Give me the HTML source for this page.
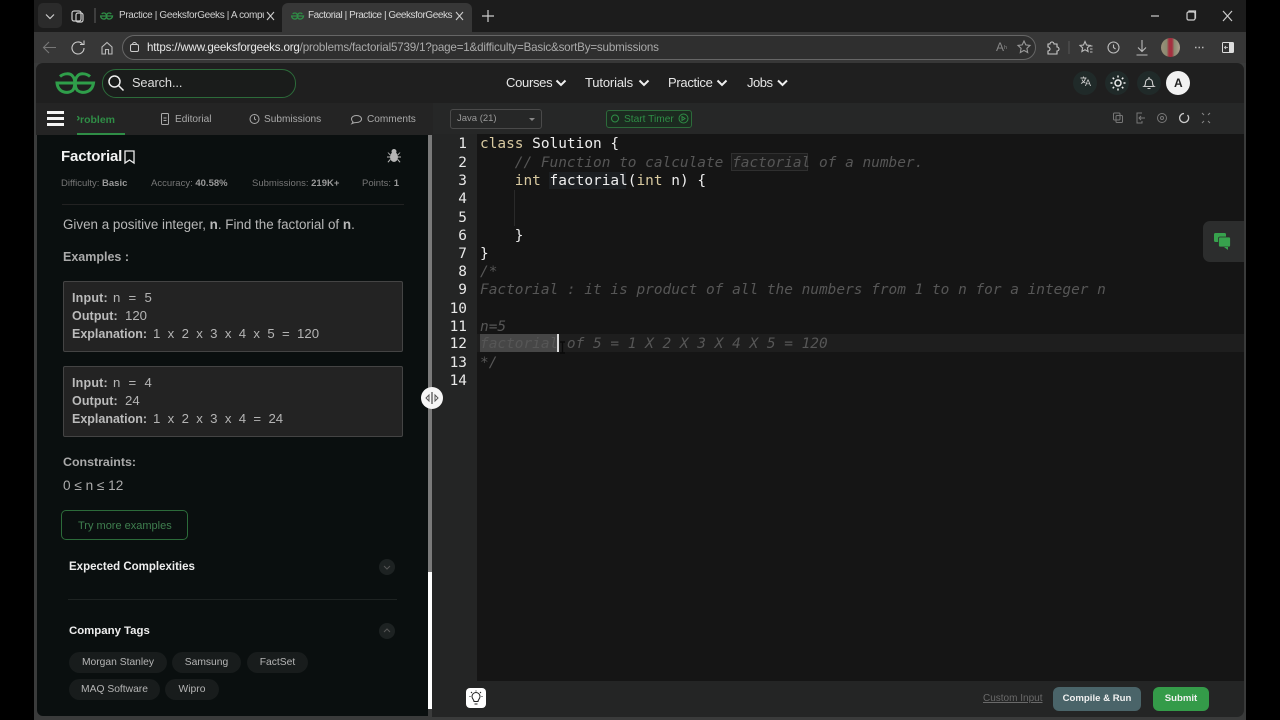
<!DOCTYPE html>
<html><head><meta charset="utf-8"><style>
html,body{margin:0;padding:0;background:#000;width:1280px;height:720px;overflow:hidden}
body{position:relative;font-family:"Liberation Sans",sans-serif;color:#ddd}
.a{position:absolute}
.t{position:absolute;white-space:nowrap;line-height:1}
svg{position:absolute;overflow:visible}
.m{font-family:"DejaVu Sans Mono","Liberation Mono",monospace;font-size:14.45px;white-space:pre;position:absolute;line-height:18px}
.c{color:#565656;font-style:italic}
.n{position:absolute;width:33px;text-align:right;left:434px;font-family:"DejaVu Sans Mono",monospace;font-size:14.45px;color:#e8e8e8;line-height:18px}
.b{font-weight:bold}
.nav{font-size:13px;color:#e6e6e6;letter-spacing:-.3px}
.ltab{font-size:10.1px;color:#aaa}
.stat{font-size:9.5px;color:#777}
.stat b{color:#999}
.lab{font-size:12.5px;color:#bbb;font-weight:bold}
.val{font-size:13.2px;color:#b4b4b4}
.tag{position:absolute;height:21px;border-radius:11px;background:#181c1c;color:#b5b5b5;font-size:10.3px;line-height:22px;text-align:center}
.box{position:absolute;left:63px;width:338px;height:69px;background:#232323;border:1px solid #444;border-radius:2px}
</style></head><body>
<div class="a" style="left:34px;top:0;width:1212px;height:720px;background:#3a3b3b"></div>
<div class="a" style="left:34px;top:0;width:1212px;height:32px;background:#1c1c1c"></div>
<div class="a" style="left:34px;top:32px;width:1212px;height:31px;background:#373737"></div>
<!-- tabs -->
<div class="a" style="left:38px;top:3px;width:24px;height:25px;background:#2b2b2b;border-radius:5px"></div>
<div class="a" style="left:282px;top:3px;width:190px;height:29px;background:#373737;border-radius:6px 6px 0 0"></div>
<svg style="left:0;top:0" width="1280" height="32" fill="none" stroke="#ccc" stroke-width="1.2">
<path d="M46 14.500l4 4 4-4"/>
<rect x="72" y="11" width="9" height="10" rx="2"/><rect x="76" y="13" width="7" height="9" rx="2"/>
<path d="M95 8v15" stroke="#555"/>
<path d="M267 12l7 8M274 12l-7 8M456 12l7 8M463 12l-7 8" stroke-width="1.1"/>
<path d="M488 10v12M482 16h12"/>
<path d="M1151 16h8"/>
<rect x="1187" y="12" width="8" height="8" rx="1.500"/><path d="M1189 12v-1h6.500v7h-.5"/>
<path d="M1223 11l9 10M1232 11l-9 10"/>
</svg>
<svg style="left:100px;top:12px" width="13" height="8" viewBox="0 0 40 22" fill="none" stroke="#2f8d46" stroke-width="4"><path d="M35 4.500C31 1 25 1 22.500 4C19.500 7 19.500 15 22.500 18.500C27 22 37 21 38.500 11H2C3 21 13 22 17.500 18.500C20.500 15 20.500 7 17.500 4C15 1 9 1 5 4.500"/></svg>
<svg style="left:291px;top:12px" width="13" height="8" viewBox="0 0 40 22" fill="none" stroke="#2f8d46" stroke-width="4"><path d="M35 4.500C31 1 25 1 22.500 4C19.500 7 19.500 15 22.500 18.500C27 22 37 21 38.500 11H2C3 21 13 22 17.500 18.500C20.500 15 20.500 7 17.500 4C15 1 9 1 5 4.500"/></svg>
<div class="t" style="left:119px;top:11px;font-size:10px;letter-spacing:-.35px;color:#d0d0d0;width:145px;overflow:hidden;height:13px">Practice | GeeksforGeeks | A compu</div>
<div class="t" style="left:308px;top:11px;font-size:10px;letter-spacing:-.45px;color:#d8d8d8;width:146px;overflow:hidden;height:13px">Factorial | Practice | GeeksforGeeks</div>
<!-- toolbar -->
<div class="a" style="left:122px;top:35px;width:914px;height:25px;box-sizing:border-box;border:1px solid #666;border-radius:13px;background:#2f2f2f"></div>
<svg style="left:129px;top:41px" width="12" height="12" fill="none" stroke="#ccc"><rect x="1.500" y="3.500" width="8" height="7" rx="1.500"/><path d="M3.500 3.500a2 2 0 0 1 4 0"/></svg>
<div class="t" style="left:147px;top:42px;font-size:11.600px;letter-spacing:-.18px;color:#aaa"><span style="color:#e8e8e8">https://www.geeksforgeeks.org</span>/problems/factorial5739/1?page=1&amp;difficulty=Basic&amp;sortBy=submissions</div>
<div class="t" style="left:996px;top:41px;font-size:12px;color:#888">A<span style="font-size:8px">ʰ</span></div>
<svg style="left:0;top:32px" width="1280" height="32" fill="none" stroke="#bbb" stroke-width="1.100">
<path d="M56 15.500H44M49 10l-5.500 5.500 5.500 5.500" stroke="#777"/>
<path d="M82.500 12a6 6 0 1 0 1.500 4M84 8.500v4h-4" stroke="#ccc"/>
<path d="M102 22v-7l5-4.500 5 4.500v7h-3.500v-4.500h-3v4.500z"/>
<path d="M1024 9l1.800 3.900 4.200.5-3.100 2.900.8 4.200-3.700-2.100-3.700 2.100.8-4.200-3.100-2.900 4.200-.5z" stroke="#999"/>
<path d="M1048 12h2a2 2 0 0 1 4 0h3v3a2 2 0 0 1 0 4v3h-9v-3a2 2 0 0 0 0-4z" stroke="#ccc"/>
<path d="M1069 9v13" stroke="#555"/>
<path d="M1085 9.500l1.500 3.500 3.500.4-2.600 2.400.7 3.700-3.100-1.800-3.100 1.800.7-3.700-2.600-2.400 3.500-.4zM1090 14h2.500M1090 17h2.500M1090 20h2.500"/>
<circle cx="1113.500" cy="15.500" r="5.500"/><path d="M1113.500 12.500v3l2 1.500"/>
<path d="M1142 8v11M1138 15.500l4 4 4-4M1136.500 23h11"/>
<path d="M1195 15.500h1.500M1198.500 15.500h1.500M1202 15.500h1.500" stroke-width="1.600"/>
<rect x="1222" y="10" width="12" height="11" rx="1.500" fill="#ddd" stroke="none"/><rect x="1223" y="11" width="6" height="9" fill="#333" stroke="none"/><path d="M1228 15.500h-3M1226 14l-1.500 1.500 1.500 1.500" stroke="#ddd" stroke-width=".8"/>
</svg>
<div class="a" style="left:1161px;top:38px;width:19px;height:19px;border-radius:50%;background:linear-gradient(90deg,#9b8f7a 0,#8a8a70 30%,#a53040 42%,#a53040 58%,#8a8a70 70%,#b0a090 100%)"></div>
<!-- page -->
<div class="a" style="left:36px;top:63px;width:1208px;height:40px;background:#1f1f1f;border-radius:7px 7px 0 0"></div>
<div class="a" style="left:36px;top:103px;width:1208px;height:32px;background:#1f1f1f"></div>
<!-- header -->
<svg style="left:55px;top:72px" width="40" height="22" fill="none" stroke="#2f9e4a" stroke-width="3"><path d="M35 4.500C31 1 25 1 22.500 4C19.500 7 19.500 15 22.500 18.500C27 22 37 21 38.500 11H2C3 21 13 22 17.500 18.500C20.500 15 20.500 7 17.500 4C15 1 9 1 5 4.500"/></svg>
<div class="a" style="left:102px;top:69px;width:192px;height:27px;border:1px solid #2c6b3a;border-radius:14px;background:#1a1c1b"></div>
<svg style="left:107px;top:74px" width="18" height="18" fill="none" stroke="#eee" stroke-width="1.500"><circle cx="7.500" cy="7.500" r="5.500"/><path d="M11.500 11.500l5 5"/></svg>
<div class="t" style="left:132px;top:77px;font-size:12.800px;letter-spacing:-.1px;color:#ddd">Search...</div>
<div class="t nav" style="left:506px;top:76px">Courses</div>
<div class="t nav" style="left:585px;top:76px;letter-spacing:-.15px">Tutorials</div>
<div class="t nav" style="left:668px;top:76px">Practice</div>
<div class="t nav" style="left:747px;top:76px;letter-spacing:-.5px">Jobs</div>
<svg style="left:0;top:76px" width="800" height="14" fill="none" stroke="#eee" stroke-width="2"><path d="M556.500 4.500l4.500 4.500 4.500-4.500M639.500 4.500l4.500 4.500 4.500-4.500M717.500 4.500l4.500 4.500 4.500-4.500M778 4.500l4.500 4.500 4.500-4.500"/></svg>
<div class="a" style="left:1073px;top:71px;width:24px;height:24px;border-radius:50%;background:#202a29"></div>
<div class="a" style="left:1105px;top:71px;width:24px;height:24px;border-radius:50%;background:#202a29"></div>
<div class="a" style="left:1137px;top:71px;width:24px;height:24px;border-radius:50%;background:#202a29"></div>
<div class="a" style="left:1166px;top:71px;width:24px;height:24px;border-radius:50%;background:#f2f2f2"></div>
<div class="t b" style="left:1174px;top:77px;font-size:12px;color:#222">A</div>
<div class="t" style="left:1080px;top:79px;font-size:9px;color:#ccc;margin-left:5px">A</div>
<svg style="left:1080px;top:76px" width="8" height="9" fill="none" stroke="#ccc" stroke-width=".9"><path d="M.5 2h6M3.500 .5v1.500M5.500 2c-.5 2.500-2 4.500-4.500 5.500M2 3.500c.5 1.500 2 3 3.500 3.500"/></svg>
<svg style="left:1108px;top:73px" width="20" height="20" fill="none" stroke="#eee" stroke-width="1.500"><circle cx="10" cy="10" r="3"/><path d="M10 2.500v2M10 15.500v2M2.500 10h2M15.500 10h2M4.700 4.700l1.400 1.400M13.900 13.900l1.400 1.400M4.700 15.300l1.400-1.400M13.900 6.100l1.400-1.400"/></svg>
<svg style="left:1142px;top:76px" width="14" height="14" fill="none" stroke="#ccc" stroke-width="1.100"><path d="M2 10.500c1.500-1 1.500-2.500 1.500-4a3.500 3.500 0 0 1 7 0c0 1.500 0 3 1.500 4zM5.500 12.500h3M7 1v2"/></svg>
<!-- left tabs -->
<div class="a" style="left:36px;top:103px;width:397px;height:32px;background:#242424"></div>
<svg style="left:47px;top:111px" width="18" height="16" fill="#f4f4f4"><rect width="17" height="3"/><rect y="6" width="17" height="3"/><rect y="12" width="17" height="3"/></svg>
<div class="a" style="left:77px;top:113px;width:48px;height:14px;overflow:hidden"><div class="t b" style="left:-4px;top:2px;font-size:10.500px;color:#2f8d46">Problem</div></div>
<div class="a" style="left:77px;top:133px;width:48px;height:2px;background:#2f8d46"></div>
<div class="t ltab" style="left:175px;top:115px">Editorial</div>
<div class="t ltab" style="left:264px;top:115px">Submissions</div>
<div class="t ltab" style="left:367px;top:115px">Comments</div>
<svg style="left:160px;top:112px" width="220" height="14" fill="none" stroke="#aaa"><rect x="1.500" y="1.500" width="7" height="11" rx="1"/><path d="M3.500 6h3M3.500 8.500h3"/><circle cx="94.500" cy="7" r="4.500"/><path d="M94.500 4.500v2.500l1.500 1"/><path d="M192 11.500l1-1.500c-1-1-1.500-2-1.500-3 0-2 2-3.500 5-3.500s5 1.500 5 3.500-2 3.500-5 3.500c-1.500 0-2.500 0-4.500 1z"/></svg>
<!-- left panel -->
<div class="a" style="left:37px;top:135px;width:391px;height:581px;background:#0a0f0f;border-radius:0 0 0 6px"></div>
<div class="a" style="left:428px;top:135px;width:4px;height:437px;background:#7a7a7a"></div>
<div class="a" style="left:428px;top:572px;width:4px;height:137px;background:#fff"></div>
<div class="t b" style="left:61px;top:149px;font-size:15px;color:#f2f2f2;letter-spacing:-.15px">Factorial</div>
<svg style="left:124px;top:150px" width="12" height="15" fill="none" stroke="#eee" stroke-width="1.300"><path d="M1 1h9v12l-4.500-3-4.500 3z"/></svg>
<svg style="left:387px;top:148px" width="14" height="15" fill="#b5b5b5"><ellipse cx="7" cy="9" rx="4" ry="5"/><circle cx="7" cy="3.500" r="2.500"/><path d="M.5 4.500h1l2 2-.7.7zM13.500 4.500h-1l-2 2 .7.7zM0 8.500h14v1H0zM.5 14l2.500-3 .7.7-2.200 2.800zM13.500 14l-2.500-3-.7.7 2.200 2.800z"/></svg>
<div class="t stat" style="left:61px;top:179px">Difficulty: <b>Basic</b></div>
<div class="t stat" style="left:151px;top:179px">Accuracy: <b>40.58%</b></div>
<div class="t stat" style="left:252px;top:179px">Submissions: <b>219K+</b></div>
<div class="t stat" style="left:362px;top:179px">Points: <b>1</b></div>
<div class="a" style="left:62px;top:204px;width:342px;height:1px;background:#222"></div>
<div class="t" style="left:63px;top:218px;font-size:13.400px;color:#b8b8b8">Given a positive integer, <b>n</b>. Find the factorial of <b>n</b>.</div>
<div class="t b" style="left:63px;top:251px;font-size:12.500px;color:#aaa">Examples :</div>
<div class="box" style="top:281px"></div>
<div class="box" style="top:366px"></div>
<div class="t lab" style="left:72px;top:292px;letter-spacing:.2px">Input:</div><div class="t val" style="left:113px;top:291px;letter-spacing:.3px">n &nbsp;=&nbsp; 5</div>
<div class="t lab" style="left:72px;top:310px;letter-spacing:.1px">Output:</div><div class="t val" style="left:125px;top:309px">120</div>
<div class="t lab" style="left:72px;top:328px">Explanation:</div><div class="t val" style="left:153px;top:327px">1 &nbsp;x&nbsp; 2 &nbsp;x&nbsp; 3 &nbsp;x&nbsp; 4 &nbsp;x&nbsp; 5 &nbsp;=&nbsp; 120</div>
<div class="t lab" style="left:72px;top:377px;letter-spacing:.2px">Input:</div><div class="t val" style="left:113px;top:376px;letter-spacing:.3px">n &nbsp;=&nbsp; 4</div>
<div class="t lab" style="left:72px;top:395px;letter-spacing:.1px">Output:</div><div class="t val" style="left:125px;top:394px">24</div>
<div class="t lab" style="left:72px;top:413px">Explanation:</div><div class="t val" style="left:153px;top:412px">1 &nbsp;x&nbsp; 2 &nbsp;x&nbsp; 3 &nbsp;x&nbsp; 4 &nbsp;=&nbsp; 24</div>
<div class="t b" style="left:63px;top:456px;font-size:12.400px;color:#aaa">Constraints:</div>
<div class="t" style="left:63px;top:479px;font-size:13.600px;color:#aaa">0 ≤ n ≤ 12</div>
<div class="a" style="left:61px;top:510px;width:125px;height:28px;border:1px solid #2c6b3a;border-radius:5px"></div>
<div class="t" style="left:78px;top:521px;font-size:11px;color:#3f7f4f">Try more examples</div>
<div class="t b" style="left:69px;top:562px;font-size:11.500px;color:#eee">Expected Complexities</div>
<div class="a" style="left:379px;top:559px;width:16px;height:16px;border-radius:50%;background:#1d2222"></div>
<div class="a" style="left:68px;top:599px;width:329px;height:1px;background:#1e2322"></div>
<div class="t b" style="left:69px;top:626px;font-size:11.400px;color:#eee">Company Tags</div>
<div class="a" style="left:379px;top:623px;width:16px;height:16px;border-radius:50%;background:#1d2222"></div>
<svg style="left:379px;top:559px" width="16" height="80" fill="none" stroke="#555"><path d="M5 7l3 3 3-3M5 73l3-3 3 3"/></svg>
<div class="tag" style="left:69px;top:652px;width:98px">Morgan Stanley</div>
<div class="tag" style="left:172px;top:652px;width:69px">Samsung</div>
<div class="tag" style="left:247px;top:652px;width:61px">FactSet</div>
<div class="tag" style="left:69px;top:679px;width:91px">MAQ Software</div>
<div class="tag" style="left:165px;top:679px;width:54px">Wipro</div>
<!-- right top bar -->
<div class="a" style="left:433px;top:103px;width:811px;height:31px;background:#262727"></div>
<div class="a" style="left:450px;top:109px;width:90px;height:18px;border:1px solid #4a4a4a;border-radius:3px"></div>
<div class="t" style="left:457px;top:114px;font-size:9.500px;color:#999">Java (21)</div>
<div class="a" style="left:529px;top:118px;border:3px solid transparent;border-top:3px solid #888"></div>
<div class="a" style="left:606px;top:110px;width:84px;height:16px;border:1px solid #2c6b3a;border-radius:3px;background:#1c2a20"></div>
<div class="t" style="left:624px;top:115px;font-size:10.200px;color:#2f8d46">Start Timer</div>
<svg style="left:610px;top:112px" width="80" height="13" fill="none" stroke="#2f8d46"><circle cx="5" cy="6.500" r="3.500"/><circle cx="73.500" cy="6.500" r="4.500"/><path d="M72 4.500l3 2-3 2z"/></svg>
<svg style="left:1110px;top:111px" width="105" height="14" fill="none" stroke="#777"><rect x="3.500" y="2" width="6.500" height="7" rx="1"/><rect x="6" y="4.500" width="6.500" height="7" rx="1"/><path d="M32 2h-5v10h5v-2M35 7h-6M31 5l-2 2 2 2"/><circle cx="52" cy="7" r="4.500"/><circle cx="52" cy="7" r="1.500"/><path d="M74 2.500a4.500 4.500 0 1 0 3.500 1.500" stroke="#ccc" stroke-width="1.300"/><path d="M94 4l-2-2M100 2l-2 2M94 10l-2 2M100 12l-2-2" stroke="#888"/></svg>
<!-- editor -->
<div class="a" style="left:432px;top:134px;width:45px;height:547px;background:#242525"></div>
<div class="a" style="left:477px;top:134px;width:767px;height:547px;background:#151515"></div>
<div class="a" style="left:432px;top:681px;width:812px;height:36px;background:#242525;border-radius:0 0 7px 0"></div>
<div class="a" style="left:477px;top:334px;width:767px;height:18px;background:#1e1e1e"></div>
<div class="a" style="left:480px;top:334px;width:78px;height:18px;background:#464646"></div>
<div class="a" style="left:557px;top:334px;width:2px;height:18px;background:#ddd"></div>
<div class="a" style="left:731px;top:153px;width:77px;height:18px;background:#1d1d1d;border:1px solid #2f2f2f;box-sizing:border-box"></div>
<div class="a" style="left:549px;top:172px;width:77px;height:17px;background:#1c1f22;box-sizing:border-box"></div>
<div class="a" style="left:514px;top:190px;width:1px;height:36px;background:#2a2a2a"></div>
<div class="n" style="top:135px">1</div><div class="n" style="top:154px">2</div><div class="n" style="top:172px">3</div><div class="n" style="top:190px">4</div><div class="n" style="top:209px">5</div><div class="n" style="top:227px">6</div><div class="n" style="top:245px">7</div><div class="n" style="top:263px">8</div><div class="n" style="top:281px">9</div><div class="n" style="top:300px">10</div><div class="n" style="top:318px">11</div><div class="n" style="top:335px">12</div><div class="n" style="top:354px">13</div><div class="n" style="top:372px">14</div>
<div class="m" style="left:480px;top:135px;color:#eee"><span style="color:#d8c9a0">class</span> Solution {</div>
<div class="m c" style="left:480px;top:154px">    // Function to calculate factorial of a number.</div>
<div class="m" style="left:480px;top:172px;color:#eee">    <span style="color:#d8c9a0">int</span> factorial(<span style="color:#d8c9a0">int</span> n) {</div>
<div class="m" style="left:480px;top:227px;color:#eee">    }</div>
<div class="m" style="left:480px;top:245px;color:#eee">}</div>
<div class="m c" style="left:480px;top:263px">/*</div>
<div class="m c" style="left:480px;top:281px">Factorial : it is product of all the numbers from 1 to n for a integer n</div>
<div class="m c" style="left:480px;top:318px">n=5</div>
<div class="m c" style="left:480px;top:335px">factorial of 5 = 1 X 2 X 3 X 4 X 5 = 120</div>
<div class="m c" style="left:480px;top:354px">*/</div>
<svg style="left:559px;top:341px" width="8" height="14" fill="none" stroke="#0a0a0a" stroke-width="1.400"><path d="M1 1h5M3.500 1v11M1 12h5"/></svg>
<!-- chat float -->
<div class="a" style="left:1203px;top:221px;width:41px;height:41px;background:#2c2d2d;border-radius:7px 0 0 7px"></div>
<svg style="left:1213px;top:232px" width="20" height="18" fill="#37a24d"><rect x="1" y="1" width="12" height="9" rx="1.500"/><rect x="5.500" y="5" width="12" height="10" rx="1.500" stroke="#2c2d2d" stroke-width=".8"/><path d="M11 15h4v3z"/></svg>
<!-- divider handle -->
<div class="a" style="left:421px;top:387px;width:22px;height:22px;border-radius:50%;background:#f6f6f6"></div>
<svg style="left:425px;top:392px" width="14" height="12" fill="none" stroke="#555"><path d="M7 0v12" stroke-width="1.300"/><path d="M4 3L1 6l3 3zM10 3l3 3-3 3z"/></svg>
<!-- bottom bar -->
<div class="a" style="left:466px;top:688px;width:20px;height:20px;border-radius:4px;background:#fff"></div>
<svg style="left:468px;top:690px" width="16" height="16" fill="none" stroke="#222"><path d="M6 11.500c0-2-2-2.500-2-5a4 4 0 0 1 8 0c0 2.500-2 3-2 5zM6.500 14h3M8 .5v1M1.500 6.500h1M13.500 6.500h1M3 2l1 1M13 2l-1 1"/></svg>
<div class="t" style="left:983px;top:693px;font-size:10px;color:#6a6a6a;text-decoration:underline;margin-top:.5px">Custom Input</div>
<div class="a" style="left:1053px;top:687px;width:88px;height:24px;background:#4a6469;border-radius:6px;color:#f0f0f0;font-size:9.600px;font-weight:bold;line-height:23px;text-align:center">Compile &amp; Run</div>
<div class="a" style="left:1153px;top:687px;width:56px;height:24px;background:#349b49;border-radius:6px;color:#f0f0f0;font-size:9.600px;font-weight:bold;line-height:23px;text-align:center">Submit</div>
</body></html>
